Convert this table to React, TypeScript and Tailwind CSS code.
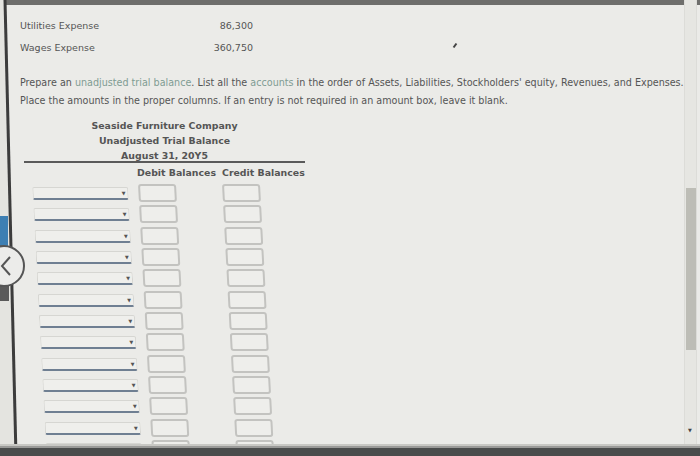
import React from "react";

const ROWS = 13;

function Row() {
  return (
    <div className="flex h-[21.33px] items-start">
      <div className="relative mt-[3px] h-[13px] w-[96px] rounded-[2px] border border-b-2 border-[#d6d6d2] border-b-[#6f7f92] bg-[#efefec]">
        <span className="absolute right-[2px] top-[3px] text-[5px] leading-none text-[#555]">▼</span>
      </div>
      <div className="ml-[10px] h-[18px] w-[38px] rounded-[3px] border-2 border-[#c3c3c0] bg-[#eeeeeb]" />
      <div className="ml-[46px] h-[18px] w-[38px] rounded-[3px] border-2 border-[#c3c3c0] bg-[#eeeeeb]" />
    </div>
  );
}

export default function App() {
  return (
    <div
      className="relative h-[456px] w-[700px] overflow-hidden bg-[#ebebe8] text-[#555]"
      style={{ fontFamily: '"DejaVu Sans", Verdana, sans-serif' }}
    >
      <div className="h-[5px] bg-[#6e6e6c]" />
      <div className="pl-[20px]">
        <div className="mt-[10px] flex w-[233px] justify-between text-[9.5px] leading-[22px]">
          <span>Utilities Expense</span>
          <span>86,300</span>
        </div>
        <div className="flex w-[233px] justify-between text-[9.5px] leading-[22px]">
          <span>Wages Expense</span>
          <span>360,750</span>
        </div>
        <div className="mt-[15px] text-[9.6px] leading-[18px]">
          <p>
            Prepare an <span className="text-[#7f9c93]">unadjusted trial balance</span>. List all the{" "}
            <span className="text-[#7f9c93]">accounts</span> in the order of Assets, Liabilities, Stockholders' equity,
            Revenues, and Expenses.
          </p>
          <p>Place the amounts in the proper columns. If an entry is not required in an amount box, leave it blank.</p>
        </div>
        <div className="ml-[4px] mt-[8px] w-[281px] text-[9.4px] font-bold leading-[15px]">
          <div className="text-center">Seaside Furniture Company</div>
          <div className="text-center">Unadjusted Trial Balance</div>
          <div className="text-center">August 31, 20Y5</div>
          <div className="mt-[-2px] h-[2px] bg-[#5a5a5a]" />
          <div className="mt-[2px] flex text-[9.4px]">
            <span className="ml-[113px]">Debit Balances</span>
            <span className="ml-[6px]">Credit Balances</span>
          </div>
        </div>
        <div className="ml-[12px] mt-[4px] origin-top skew-x-[3deg]">
          {Array.from({ length: ROWS }).map((_, i) => (
            <Row key={i} />
          ))}
        </div>
      </div>

      {/* cursor mark */}
      <div className="absolute left-[454px] top-[43px] h-[5px] w-[2px] rotate-[35deg] bg-[#444]" />

      {/* scrollbar */}
      <div className="absolute right-[3px] top-[0px] h-[446px] w-[13px] border-x border-[#dcdcd8] bg-[#e6e6e2]">
        <div className="mx-auto mt-[188px] h-[162px] w-[10px] bg-[#bdbdb6]" />
        <div className="absolute bottom-[13px] left-[3px] text-[5px] leading-none text-[#444]">▼</div>
      </div>

      {/* left photo edge */}
      <svg className="absolute left-0 top-0" width="40" height="456" viewBox="0 0 40 456">
        <polygon points="0,0 4,0 17,456 0,456" fill="#e4e4e0" />
        <line x1="5" y1="0" x2="16" y2="456" stroke="#3c3c3c" strokeWidth="3" />
        <rect x="0" y="216" width="8" height="34" fill="#3d7fb3" />
        <rect x="0" y="285" width="9" height="16" fill="#5a5a5a" />
        <circle cx="4" cy="266" r="20" fill="#ececea" stroke="#555" strokeWidth="2" />
        <polyline points="10,257 2,266 10,275" fill="none" stroke="#555" strokeWidth="2" />
      </svg>

      {/* bottom bezel */}
      <div className="absolute bottom-0 left-0 h-[12px] w-full">
        <div className="h-[2px] bg-[#c8c8c4]" />
        <div className="h-[2px] bg-[#9a9a98]" />
        <div className="h-[8px] bg-[#4a4c4c]" />
      </div>
    </div>
  );
}
